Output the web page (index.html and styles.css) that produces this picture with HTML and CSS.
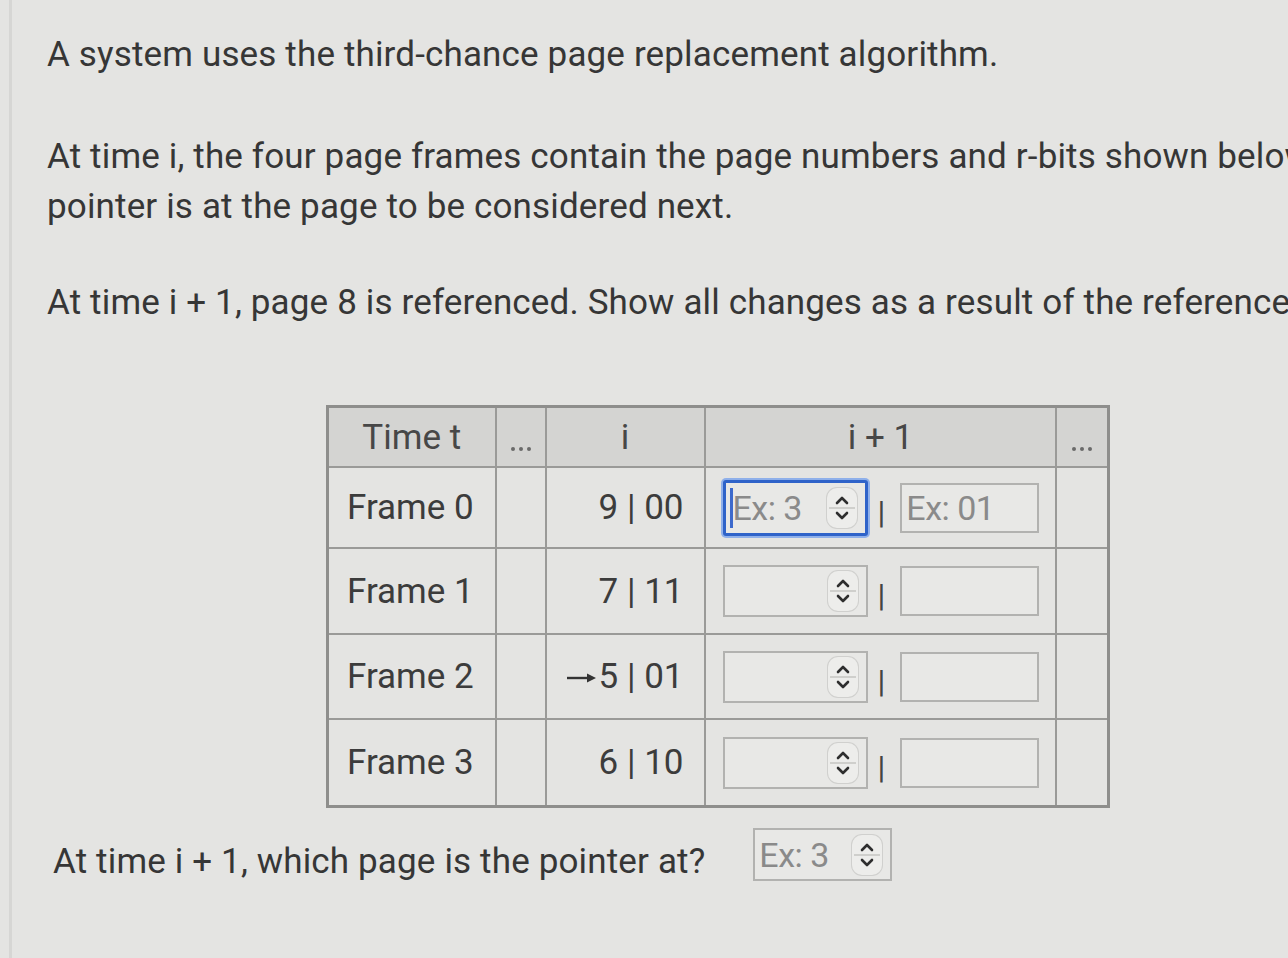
FILE: index.html
```html
<!DOCTYPE html>
<html>
<head>
<meta charset="utf-8">
<link rel="stylesheet" href="styles.css">
</head>
<body>
<div class="page">
  <div class="content">
    <p class="para first">A system uses the third-chance page replacement algorithm.</p>
    <p class="para second">At time i, the four page frames contain the page numbers and r-bits shown below. The<br>pointer is at the page to be considered next.</p>
    <p class="para third">At time i + 1, page 8 is referenced. Show all changes as a result of the reference.</p>

    <table class="grid">
      <colgroup>
        <col class="c-label"><col class="c-dots"><col class="c-i"><col class="c-next"><col class="c-dots2">
      </colgroup>
      <thead>
        <tr class="head">
          <th>Time t</th>
          <th class="dots"><span class="dotrow"><i></i><i></i><i></i></span></th>
          <th>i</th>
          <th>i + 1</th>
          <th class="dots"><span class="dotrow"><i></i><i></i><i></i></span></th>
        </tr>
      </thead>
      <tbody>
        <tr class="r0">
          <td class="label">Frame 0</td>
          <td></td>
          <td class="val">9 | 00</td>
          <td>
            <div class="pair">
              <div class="num focus"><span class="caret"></span><span class="ph">Ex: 3</span>
                <span class="spin"><svg viewBox="0 0 30 40" width="30" height="40"><path d="M10 15 L15 10 L20 15" /><line x1="2" y1="20" x2="28" y2="20" class="div"/><path d="M10 25 L15 30 L20 25" /></svg></span>
              </div>
              <span class="bar">|</span>
              <div class="txt"><span class="ph">Ex: 01</span></div>
            </div>
          </td>
          <td></td>
        </tr>
        <tr class="r1">
          <td class="label">Frame 1</td>
          <td></td>
          <td class="val">7 | 11</td>
          <td>
            <div class="pair">
              <div class="num"><span class="ph"></span>
                <span class="spin"><svg viewBox="0 0 30 40" width="30" height="40"><path d="M10 15 L15 10 L20 15" /><line x1="2" y1="20" x2="28" y2="20" class="div"/><path d="M10 25 L15 30 L20 25" /></svg></span>
              </div>
              <span class="bar">|</span>
              <div class="txt"></div>
            </div>
          </td>
          <td></td>
        </tr>
        <tr class="r2">
          <td class="label">Frame 2</td>
          <td></td>
          <td class="val"><svg class="arrow" viewBox="0 0 30 12" width="30" height="12"><line x1="0" y1="6" x2="22" y2="6"/><path d="M20 1.5 L29 6 L20 10.5 Z"/></svg>5 | 01</td>
          <td>
            <div class="pair">
              <div class="num"><span class="ph"></span>
                <span class="spin"><svg viewBox="0 0 30 40" width="30" height="40"><path d="M10 15 L15 10 L20 15" /><line x1="2" y1="20" x2="28" y2="20" class="div"/><path d="M10 25 L15 30 L20 25" /></svg></span>
              </div>
              <span class="bar">|</span>
              <div class="txt"></div>
            </div>
          </td>
          <td></td>
        </tr>
        <tr class="r3">
          <td class="label">Frame 3</td>
          <td></td>
          <td class="val">6 | 10</td>
          <td>
            <div class="pair">
              <div class="num"><span class="ph"></span>
                <span class="spin"><svg viewBox="0 0 30 40" width="30" height="40"><path d="M10 15 L15 10 L20 15" /><line x1="2" y1="20" x2="28" y2="20" class="div"/><path d="M10 25 L15 30 L20 25" /></svg></span>
              </div>
              <span class="bar">|</span>
              <div class="txt"></div>
            </div>
          </td>
          <td></td>
        </tr>
      </tbody>
    </table>

    <div class="question">
      <span class="q-text">At time i + 1, which page is the pointer at?</span>
      <div class="num small"><span class="ph">Ex: 3</span>
        <span class="spin"><svg viewBox="0 0 30 40" width="30" height="40"><path d="M10 15 L15 10 L20 15" /><line x1="2" y1="20" x2="28" y2="20" class="div"/><path d="M10 25 L15 30 L20 25" /></svg></span>
      </div>
    </div>
  </div>
</div>
</body>
</html>
```

FILE: styles.css
```css
html, body {
  margin: 0;
  padding: 0;
}

body {
  width: 1288px;
  height: 958px;
  overflow: hidden;
  background: #e4e4e2;
  font-family: Roboto, "Liberation Sans", sans-serif;
  color: #363636;
}

.page {
  height: 958px;
  margin-left: 9px;
  border-left: 3px solid #d6d6d4;
}

.content {
  padding: 30px 0 0 35px;
}

.para {
  margin: 0;
  font-size: 35px;
  line-height: 50px;
  white-space: nowrap;
  letter-spacing: 0.15px;
}

.para.first {
  margin-bottom: 52px;
}

.para.second {
  margin-bottom: 46px;
}

.grid {
  margin: 77px 0 0 279px;
  border-collapse: collapse;
  border: 3px solid #8e8e8c;
  font-size: 35px;
  color: #3c3c3c;
}

.c-label { width: 168px; }
.c-dots { width: 50px; }
.c-i { width: 159px; }
.c-next { width: 349px; }
.c-dots2 { width: 52px; }

.grid th,
.grid td {
  border: 2px solid #9a9a98;
  padding: 0;
}

.head th {
  height: 58px;
  background: #d4d4d2;
  font-weight: 400;
  text-align: center;
  color: #474747;
}

.dotrow {
  display: flex;
  justify-content: center;
  gap: 4px;
  padding-top: 24px;
}

.dotrow i {
  display: block;
  width: 4px;
  height: 4px;
  border-radius: 50%;
  background: #6a6a6a;
}

.r0 td { height: 79px; }
.r1 td { height: 84px; }
.r2 td { height: 83px; }
.r3 td { height: 85px; }

.label {
  text-align: left;
  padding-left: 18px !important;
}

.val {
  text-align: right;
  padding-right: 20px !important;
}

.arrow {
  vertical-align: middle;
  margin-right: 2px;
  position: relative;
  top: -1px;
}

.arrow line {
  stroke: #333;
  stroke-width: 2.4;
}

.arrow path {
  fill: #333;
}

.pair {
  display: flex;
  align-items: center;
  padding: 0 16px 0 17px;
}

.num {
  position: relative;
  box-sizing: border-box;
  width: 145px;
  height: 52px;
  border: 2px solid #b2b2b0;
  background: #e8e8e6;
  display: flex;
  align-items: center;
}

.num.focus {
  height: 56px;
  border: 3px solid #2f63c9;
  box-shadow: 0 0 0 2px #8fb0ea;
  border-radius: 3px;
}

.caret {
  width: 3px;
  height: 40px;
  background: #3c69cc;
  margin-left: 4px;
}

.ph {
  font-size: 34px;
  color: #8a8a8a;
  padding-left: 4px;
  letter-spacing: -0.5px;
}

.focus .ph {
  padding-left: 0;
}

.spin {
  position: absolute;
  right: 8px;
  top: 50%;
  margin-top: -20px;
  width: 30px;
  height: 40px;
  border-radius: 10px;
  background: #ededeb;
  box-shadow: 0 0 0 1px #d0d0ce;
}

.spin svg {
  display: block;
}

.spin path {
  fill: none;
  stroke: #2e2e2e;
  stroke-width: 2.6;
  stroke-linecap: round;
  stroke-linejoin: round;
}

.spin line.div {
  stroke: #c4c4c2;
  stroke-width: 1.5;
}

.bar {
  font-size: 32px;
  color: #444;
  margin: 0 15px 0 10px;
  line-height: 1;
  padding-top: 8px;
}

.txt {
  box-sizing: border-box;
  width: 139px;
  height: 50px;
  border: 2px solid #b2b2b0;
  background: #e8e8e6;
  display: flex;
  align-items: center;
}

.question {
  display: flex;
  align-items: flex-start;
  margin: 20px 0 0 6px;
}

.q-text {
  font-size: 35px;
  line-height: 40px;
  color: #363636;
  padding-top: 14px;
  letter-spacing: 0.15px;
}

.num.small {
  width: 139px;
  height: 53px;
  margin-left: 48px;
}
```
